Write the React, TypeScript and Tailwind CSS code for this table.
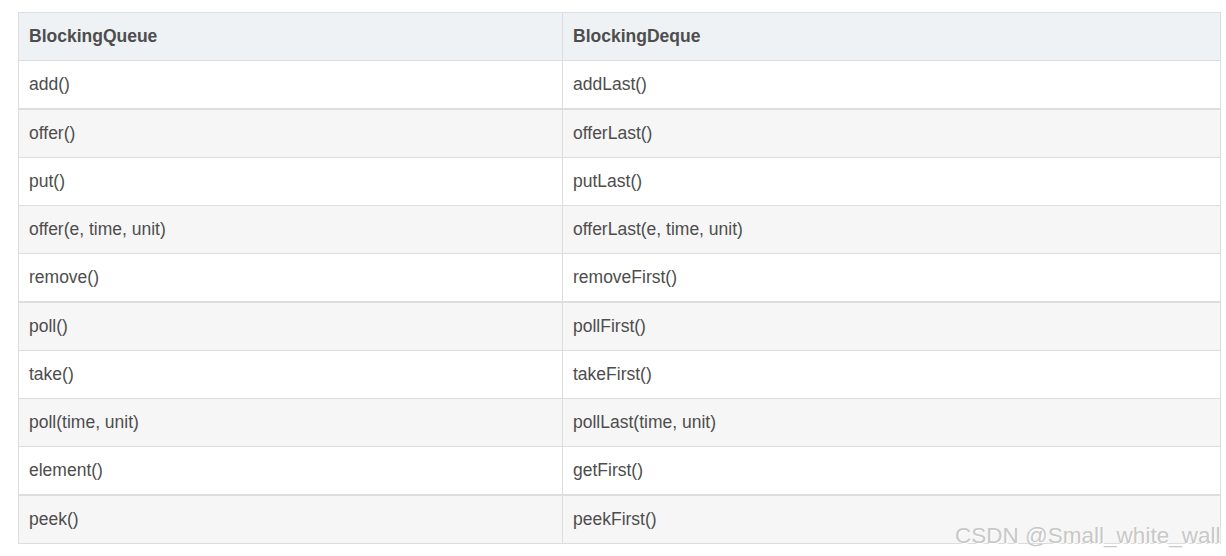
import React from "react";

const rows: [string, string, string][] = [
  ["add()", "addLast()", "h-[48px] border-b-2"],
  ["offer()", "offerLast()", "h-[49px]"],
  ["put()", "putLast()", "h-[48px]"],
  ["offer(e, time, unit)", "offerLast(e, time, unit)", "h-[48px]"],
  ["remove()", "removeFirst()", "h-[48px] border-b-2"],
  ["poll()", "pollFirst()", "h-[49px]"],
  ["take()", "takeFirst()", "h-[48px]"],
  ["poll(time, unit)", "pollLast(time, unit)", "h-[48px]"],
  ["element()", "getFirst()", "h-[48px] border-b-2"],
  ["peek()", "peekFirst()", "h-[49px]"],
];

export default function App() {
  return (
    <div
      className="relative w-[1226px] h-[556px] bg-white overflow-hidden pt-[12px] pl-[18px]"
      style={{ fontFamily: '"Liberation Sans", Arial, sans-serif' }}
    >
      <table className="w-[1202px] border-collapse text-[17.5px] text-[#4d4d4d] table-fixed">
        <colgroup>
          <col className="w-[544px]" />
          <col className="w-[658px]" />
        </colgroup>
        <thead>
          <tr className="bg-[#eef2f5]">
            <th className="h-[48px] border border-[#dddddd] px-[10px] text-left font-bold">BlockingQueue</th>
            <th className="h-[48px] border border-[#dddddd] px-[10px] text-left font-bold">BlockingDeque</th>
          </tr>
        </thead>
        <tbody>
          {rows.map(([a, b, h], i) => (
            <tr key={i} className={i % 2 === 1 ? "bg-[#f6f6f6]" : "bg-white"}>
              <td className={`${h} border border-[#dddddd] px-[10px]`}>{a}</td>
              <td className={`${h} border border-[#dddddd] px-[10px]`}>{b}</td>
            </tr>
          ))}
        </tbody>
      </table>
      <div
        className="absolute left-[955px] top-[525px] text-[22.5px] text-[#c8c8c8] leading-none whitespace-nowrap"
        style={{ textShadow: "1px 1px 0 #ffffff" }}
      >
        CSDN @Small_white_wall
      </div>
    </div>
  );
}
